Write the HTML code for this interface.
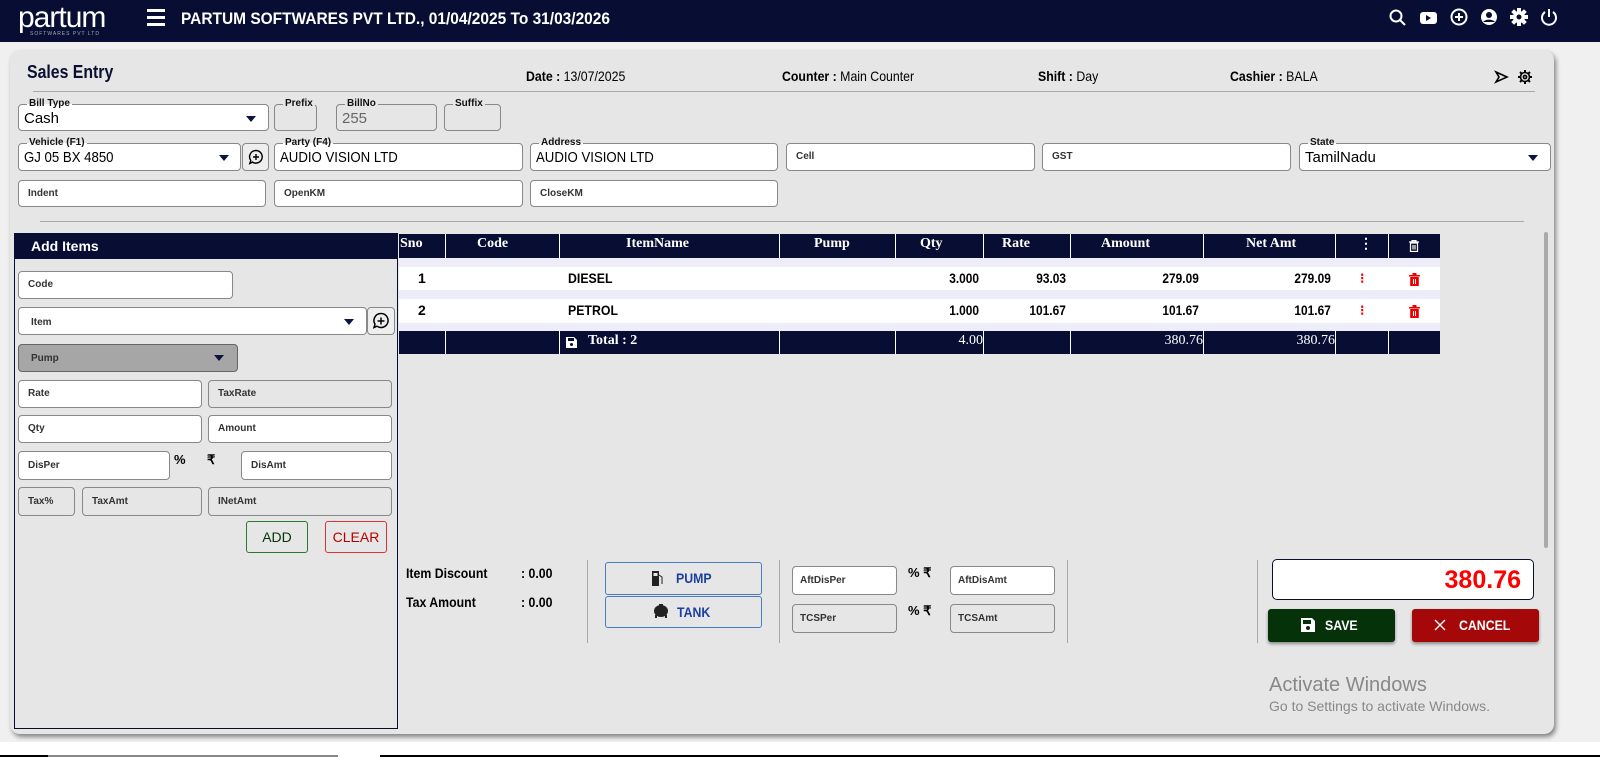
<!DOCTYPE html>
<html><head><meta charset="utf-8"><style>
*{box-sizing:border-box;margin:0;padding:0}
body{width:1600px;height:772px;background:#fff;font-family:"Liberation Sans",sans-serif;position:relative;overflow:hidden;color:#000}
.a{position:absolute;white-space:nowrap}
.nav{left:0;top:0;width:1600px;height:42px;background:#070d33}
.bg{left:0;top:42px;width:1600px;height:700px;background:#f0f0f0}
.card{left:10px;top:50px;width:1544px;height:684px;background:#e6e6e6;border-radius:10px;box-shadow:2px 3px 5px rgba(0,0,0,.45)}
.f{position:absolute;background:#fff;border:1px solid #888;border-radius:4px}
.g{background:#e6e6e6}
.ph{position:absolute;left:9px;font:bold 10px "Liberation Sans",sans-serif;color:#333;white-space:nowrap}
.lg{position:absolute;top:-7px;left:8px;font:bold 10px "Liberation Sans",sans-serif;color:#111;background:linear-gradient(#e6e6e6 50%,#fff 50%);padding:0 2px;line-height:12px;white-space:nowrap}
.val{position:absolute;left:5px;top:5px;font:15px "Liberation Sans",sans-serif;white-space:nowrap}
.dd{position:absolute;width:0;height:0;border-left:5px solid transparent;border-right:5px solid transparent;border-top:6px solid #0a1540}
.b{font-weight:bold}
.col{position:absolute;top:0;width:1px;background:#fff}
.vl{position:absolute;width:1px;background:#aaa;top:560px;height:83px}
.n{display:inline-block;transform:scaleX(.88);transform-origin:left}
.nr{display:inline-block;transform:scaleX(.85);transform-origin:right}
</style></head><body>
<div class="a nav"></div>
<div class="a" style="left:18px;top:3px;color:#fff;font:30px 'Liberation Sans',sans-serif;letter-spacing:-1px;line-height:30px">partum</div>
<div class="a" style="left:30px;top:31px;color:#aab;font:5px 'Liberation Sans',sans-serif;letter-spacing:1px">SOFTWARES PVT LTD</div>
<div class="a" style="left:147px;top:9px;width:18px;height:3px;background:#fff;box-shadow:0 7px 0 #fff,0 14px 0 #fff"></div>
<div class="a" style="left:181px;top:9px;color:#fff;font:bold 17px 'Liberation Sans',sans-serif"><span class="n" style="transform:scaleX(.91)">PARTUM SOFTWARES PVT LTD., 01/04/2025 To 31/03/2026</span></div>
<svg class="a" style="left:1388px;top:8px" width="200" height="20" viewBox="0 0 200 20" fill="none" stroke="#fff" stroke-width="2">
<circle cx="8" cy="8" r="5.5"/><path d="M12 12l5 5"/>
<rect x="32" y="4" width="17" height="12" rx="3" fill="#fff" stroke="none"/><path d="M38 7v6l5-3z" fill="#070d33" stroke="none"/>
<circle cx="71" cy="9" r="7.5"/><path d="M71 5v8M67 9h8"/>
<circle cx="101" cy="9" r="8" fill="#fff" stroke="none"/><circle cx="101" cy="7" r="3" fill="#070d33" stroke="none"/><path d="M95 14a7 5 0 0 1 12 0" fill="#070d33" stroke="none"/>
<g transform="translate(131 9)" fill="#fff" stroke="none"><circle r="6"/><rect x="-2" y="-9" width="4" height="18"/><rect x="-2" y="-9" width="4" height="18" transform="rotate(45)"/><rect x="-2" y="-9" width="4" height="18" transform="rotate(90)"/><rect x="-2" y="-9" width="4" height="18" transform="rotate(135)"/><circle r="2.5" fill="#070d33"/></g>
<path d="M157 4a7 7 0 1 0 8 0M161 1v8"/>
</svg>
<div class="a bg"></div>
<div class="a card"></div>
<div class="a b" style="left:27px;top:62px;font-size:18px;color:#0a0f30"><span class="n">Sales Entry</span></div>
<div class="a" style="left:526px;top:68px;font-size:14px"><span class="n"><b>Date :</b> 13/07/2025</span></div>
<div class="a" style="left:782px;top:68px;font-size:14px"><span class="n"><b>Counter :</b> Main Counter</span></div>
<div class="a" style="left:1038px;top:68px;font-size:14px"><span class="n"><b>Shift :</b> Day</span></div>
<div class="a" style="left:1230px;top:68px;font-size:14px"><span class="n"><b>Cashier :</b> BALA</span></div>
<svg class="a" style="left:1494px;top:69px" width="40" height="16" fill="none" stroke="#000" stroke-width="1.6"><path d="M2 3l11 5-11 5 3-5z"/><g transform="translate(31 8)"><circle r="4.5"/><path d="M0-7v2.5M0 4.5V7M-7 0h2.5M4.5 0H7M-5-5l1.8 1.8M3.2 3.2L5 5M5-5L3.2-3.2M-3.2 3.2L-5 5" stroke-width="2"/><circle r="1.6"/></g></svg>
<div class="a" style="left:33px;top:91px;width:1502px;height:1px;background:#aaa"></div>

<div class="f" style="left:18px;top:104px;width:251px;height:27px"><span class="lg">Bill Type</span><span class="val" style="top:5px">Cash</span><i class="dd" style="left:227px;top:11px"></i></div>
<div class="f g" style="left:274px;top:104px;width:43px;height:27px"><span class="lg" style="background:#e6e6e6">Prefix</span></div>
<div class="f g" style="left:336px;top:104px;width:101px;height:27px"><span class="lg" style="background:#e6e6e6">BillNo</span><span class="val" style="color:#666">255</span></div>
<div class="f g" style="left:444px;top:104px;width:57px;height:27px"><span class="lg" style="background:#e6e6e6">Suffix</span></div>

<div class="f" style="left:18px;top:143px;width:223px;height:28px"><span class="lg">Vehicle (F1)</span><span class="val"><span class="n">GJ 05 BX 4850</span></span><i class="dd" style="left:200px;top:11px"></i></div>
<div class="f" style="left:242px;top:143px;width:27px;height:28px;background:#eee"><svg class="a" style="left:5px;top:5px" width="16" height="16" fill="none" stroke="#000" stroke-width="1.4"><path d="M8 1.5a6.3 6.3 0 1 1-3.5 11.6L1.8 14.5l1-3A6.3 6.3 0 0 1 8 1.5zM8 5v6M5 8h6"/></svg></div>
<div class="f" style="left:274px;top:143px;width:249px;height:28px"><span class="lg">Party (F4)</span><span class="val"><span class="n">AUDIO VISION LTD</span></span></div>
<div class="f" style="left:530px;top:143px;width:248px;height:28px"><span class="lg">Address</span><span class="val"><span class="n">AUDIO VISION LTD</span></span></div>
<div class="f" style="left:786px;top:143px;width:249px;height:28px"><span class="ph" style="top:7px">Cell</span></div>
<div class="f" style="left:1042px;top:143px;width:249px;height:28px"><span class="ph" style="top:7px">GST</span></div>
<div class="f" style="left:1299px;top:143px;width:252px;height:28px"><span class="lg">State</span><span class="val">TamilNadu</span><i class="dd" style="left:228px;top:11px"></i></div>

<div class="f" style="left:18px;top:180px;width:248px;height:27px"><span class="ph" style="top:7px">Indent</span></div>
<div class="f" style="left:274px;top:180px;width:249px;height:27px"><span class="ph" style="top:7px">OpenKM</span></div>
<div class="f" style="left:530px;top:180px;width:248px;height:27px"><span class="ph" style="top:7px">CloseKM</span></div>
<div class="a" style="left:40px;top:221px;width:1484px;height:1px;background:#aaa"></div>

<div class="a" style="left:14px;top:233px;width:384px;height:496px;border:1px solid #070d33"></div>
<div class="a" style="left:14px;top:233px;width:384px;height:26px;background:#070d33;color:#fff;font:bold 14px 'Liberation Sans',sans-serif;padding:5px 17px">Add Items</div>
<div class="f" style="left:18px;top:271px;width:215px;height:28px"><span class="ph" style="top:7px">Code</span></div>
<div class="f" style="left:18px;top:307px;width:349px;height:28px"><span class="ph" style="top:9px;left:12px">Item</span><i class="dd" style="left:325px;top:11px"></i></div>
<div class="f" style="left:367px;top:307px;width:28px;height:28px;background:#eee"><svg class="a" style="left:4px;top:4px" width="18" height="18" fill="none" stroke="#000" stroke-width="1.5"><path d="M9 1.5a7 7 0 1 1-4 12.7L2 15.5l1-3.3A7 7 0 0 1 9 1.5zM9 5.5v7M5.5 9h7"/></svg></div>
<div class="f" style="left:18px;top:344px;width:220px;height:28px;background:#a6a6a6;border-color:#666"><span class="ph" style="top:8px;left:12px">Pump</span><i class="dd" style="left:195px;top:10px"></i></div>
<div class="f" style="left:18px;top:380px;width:184px;height:28px"><span class="ph" style="top:7px">Rate</span></div>
<div class="f g" style="left:208px;top:380px;width:184px;height:28px"><span class="ph" style="top:7px">TaxRate</span></div>
<div class="f" style="left:18px;top:415px;width:184px;height:28px"><span class="ph" style="top:7px">Qty</span></div>
<div class="f" style="left:208px;top:415px;width:184px;height:28px"><span class="ph" style="top:7px">Amount</span></div>
<div class="f" style="left:18px;top:451px;width:152px;height:29px"><span class="ph" style="top:8px">DisPer</span></div>
<div class="a b" style="left:174px;top:452px;font-size:13px">%</div>
<div class="a b" style="left:207px;top:452px;font-size:13px">₹</div>
<div class="f" style="left:241px;top:451px;width:151px;height:29px"><span class="ph" style="top:8px">DisAmt</span></div>
<div class="f g" style="left:18px;top:487px;width:57px;height:29px"><span class="ph" style="top:8px">Tax%</span></div>
<div class="f g" style="left:82px;top:487px;width:120px;height:29px"><span class="ph" style="top:8px">TaxAmt</span></div>
<div class="f g" style="left:208px;top:487px;width:184px;height:29px"><span class="ph" style="top:8px">INetAmt</span></div>
<div class="a" style="left:246px;top:521px;width:62px;height:32px;border:1px solid #2b7a2b;border-radius:3px;color:#063209;font:14px 'Liberation Sans',sans-serif;text-align:center;line-height:30px">ADD</div>
<div class="a" style="left:325px;top:521px;width:62px;height:32px;border:1px solid #d33;border-radius:3px;color:#b00;font:14px 'Liberation Sans',sans-serif;text-align:center;line-height:30px">CLEAR</div>

<div class="a" style="left:399px;top:234px;width:1041px;height:24px;background:#070d33"></div>
<div class="a" style="left:399px;top:258px;width:1041px;height:73px;background:#ededfa"></div>
<div class="a" style="left:399px;top:267px;width:1041px;height:23px;background:#fff"></div>
<div class="a" style="left:399px;top:299px;width:1041px;height:24px;background:#fff"></div>
<div class="a" style="left:399px;top:331px;width:1041px;height:23px;background:#070d33"></div>
<div class="a" style="left:0;top:234px;height:24px">
<i class="col" style="left:445px;height:24px"></i><i class="col" style="left:559px;height:24px"></i><i class="col" style="left:779px;height:24px"></i><i class="col" style="left:895px;height:24px"></i><i class="col" style="left:983px;height:24px"></i><i class="col" style="left:1070px;height:24px"></i><i class="col" style="left:1203px;height:24px"></i><i class="col" style="left:1335px;height:24px"></i><i class="col" style="left:1388px;height:24px"></i></div>
<div class="a" style="left:0;top:331px;height:23px">
<i class="col" style="left:445px;height:23px"></i><i class="col" style="left:559px;height:23px"></i><i class="col" style="left:779px;height:23px"></i><i class="col" style="left:895px;height:23px"></i><i class="col" style="left:983px;height:23px"></i><i class="col" style="left:1070px;height:23px"></i><i class="col" style="left:1203px;height:23px"></i><i class="col" style="left:1335px;height:23px"></i><i class="col" style="left:1388px;height:23px"></i></div>
<div class="a" style="top:236px;left:0;color:#fff;font:bold 14px 'Liberation Serif',serif">
<span class="a" style="left:400px">Sno</span><span class="a" style="left:477px">Code</span><span class="a" style="left:626px">ItemName</span><span class="a" style="left:814px">Pump</span><span class="a" style="left:920px">Qty</span><span class="a" style="left:1002px">Rate</span><span class="a" style="left:1101px">Amount</span><span class="a" style="left:1246px">Net Amt</span><span class="a" style="left:1359px">⋮</span>
</div>
<svg class="a" style="left:1409px;top:240px" width="10" height="12" fill="none" stroke="#fff" stroke-width="1.2"><path d="M0 2h10M3 2V0.6h4V2M1.5 3h7v8.5h-7zM4 5v4.5M6 5v4.5"/></svg>
<div class="a b" style="top:270px;left:0;font-size:14px">
<span class="a" style="left:418px">1</span><span class="a" style="left:568px"><span class="n">DIESEL</span></span><span class="a" style="left:920px;width:59px;text-align:right"><span class="nr">3.000</span></span><span class="a" style="left:1000px;width:66px;text-align:right"><span class="nr">93.03</span></span><span class="a" style="left:1120px;width:79px;text-align:right"><span class="nr">279.09</span></span><span class="a" style="left:1252px;width:79px;text-align:right"><span class="nr">279.09</span></span><span class="a" style="left:1360px;color:#e00">⁝</span></div>
<div class="a b" style="top:302px;left:0;font-size:14px">
<span class="a" style="left:418px">2</span><span class="a" style="left:568px"><span class="n">PETROL</span></span><span class="a" style="left:920px;width:59px;text-align:right"><span class="nr">1.000</span></span><span class="a" style="left:1000px;width:66px;text-align:right"><span class="nr">101.67</span></span><span class="a" style="left:1120px;width:79px;text-align:right"><span class="nr">101.67</span></span><span class="a" style="left:1252px;width:79px;text-align:right"><span class="nr">101.67</span></span><span class="a" style="left:1360px;color:#e00">⁝</span></div>
<svg class="a" style="left:1409px;top:273px" width="11" height="13" fill="#e00"><path d="M0 2h11v1.5H0zM3.5 0h4v2h-4zM1.2 4h8.6v9H1.2z"/><path d="M4 6h1v5H4zM6 6h1v5H6z" fill="#fff"/></svg>
<svg class="a" style="left:1409px;top:305px" width="11" height="13" fill="#e00"><path d="M0 2h11v1.5H0zM3.5 0h4v2h-4zM1.2 4h8.6v9H1.2z"/><path d="M4 6h1v5H4zM6 6h1v5H6z" fill="#fff"/></svg>
<div class="a" style="top:333px;left:0;color:#fff;font:14px 'Liberation Serif',serif">
<svg class="a" style="left:566px;top:3px" width="11" height="12"><path d="M0 1h8l3 3v8H0z" fill="#fff"/><rect x="2" y="2" width="6" height="3" fill="#070d33"/><circle cx="5.5" cy="8.5" r="1.5" fill="#070d33"/></svg>
<span class="a b" style="left:588px">Total : 2</span><span class="a" style="left:920px;width:63px;text-align:right">4.00</span><span class="a" style="left:1120px;width:83px;text-align:right">380.76</span><span class="a" style="left:1250px;width:85px;text-align:right">380.76</span></div>
<div class="a" style="left:1544px;top:232px;width:4px;height:316px;background:#aaa;border-radius:2px"></div>

<div class="a b" style="left:406px;top:565px;font-size:14px"><span class="n">Item Discount</span></div><div class="a b" style="left:521px;top:565px;font-size:14px"><span class="n">: 0.00</span></div>
<div class="a b" style="left:406px;top:594px;font-size:14px"><span class="n">Tax Amount</span></div><div class="a b" style="left:521px;top:594px;font-size:14px"><span class="n">: 0.00</span></div>
<i class="vl" style="left:587px"></i><i class="vl" style="left:779px"></i><i class="vl" style="left:1067px"></i><i class="vl" style="left:1257px"></i>
<div class="a" style="left:605px;top:562px;width:157px;height:33px;border:1px solid #4a7bc4;border-radius:3px;color:#1a3fa0;font:bold 14px 'Liberation Sans',sans-serif;line-height:31px;padding-left:70px"><span class="n">PUMP</span></div>
<svg class="a" style="left:651px;top:571px" width="12" height="15" fill="#222"><path d="M1 0h7v15H1z"/><rect x="2.5" y="2" width="4" height="3" fill="#e6e6e6"/><path d="M8 4l3 2v7" stroke="#222" fill="none"/></svg>
<div class="a" style="left:605px;top:596px;width:157px;height:32px;border:1px solid #4a7bc4;border-radius:3px;color:#1a3fa0;font:bold 14px 'Liberation Sans',sans-serif;line-height:30px;padding-left:71px"><span class="n">TANK</span></div>
<svg class="a" style="left:653px;top:604px" width="16" height="14" fill="#222"><ellipse cx="8" cy="7" rx="7" ry="6"/><rect x="6" y="0" width="4" height="2"/><rect x="2" y="11" width="2" height="3"/><rect x="12" y="11" width="2" height="3"/></svg>
<div class="f" style="left:792px;top:566px;width:105px;height:29px"><span class="ph" style="top:8px;left:7px">AftDisPer</span></div>
<div class="a b" style="left:908px;top:565px;font-size:13px">% ₹</div>
<div class="f" style="left:950px;top:566px;width:105px;height:29px"><span class="ph" style="top:8px;left:7px">AftDisAmt</span></div>
<div class="f g" style="left:792px;top:604px;width:105px;height:29px"><span class="ph" style="top:8px;left:7px">TCSPer</span></div>
<div class="a b" style="left:908px;top:603px;font-size:13px">% ₹</div>
<div class="f g" style="left:950px;top:604px;width:105px;height:29px"><span class="ph" style="top:8px;left:7px">TCSAmt</span></div>
<div class="a" style="left:1272px;top:559px;width:262px;height:41px;background:#fff;border:1px solid #0a0f30;border-radius:5px;color:#f00;font:bold 25px 'Liberation Sans',sans-serif;text-align:right;padding:6px 12px 0 0">380.76</div>
<div class="a" style="left:1268px;top:609px;width:127px;height:33px;background:#063209;border-radius:3px;box-shadow:0 2px 3px rgba(0,0,0,.4);color:#fff;font:bold 14px 'Liberation Sans',sans-serif;line-height:33px;padding-left:57px"><span class="n">SAVE</span></div>
<svg class="a" style="left:1301px;top:618px" width="14" height="14"><path d="M0 0h11l3 3v11H0z" fill="#fff"/><rect x="2" y="2" width="8" height="4" fill="#063209"/><circle cx="7" cy="10" r="2" fill="#063209"/></svg>
<div class="a" style="left:1412px;top:609px;width:127px;height:33px;background:#a50808;border-radius:3px;box-shadow:0 2px 3px rgba(0,0,0,.4);color:#fff;font:bold 14px 'Liberation Sans',sans-serif;line-height:33px;padding-left:47px"><span class="n">CANCEL</span></div>
<svg class="a" style="left:1434px;top:619px" width="12" height="12" stroke="#fff" stroke-width="1.4"><path d="M1 1l10 10M11 1L1 11"/></svg>
<div class="a" style="left:1269px;top:674px;font:20px 'Liberation Sans',sans-serif;color:#888">Activate Windows</div>
<div class="a" style="left:1269px;top:698px;font:14px 'Liberation Sans',sans-serif;color:#888">Go to Settings to activate Windows.</div>
<div class="a" style="left:0;top:755px;width:48px;height:2px;background:#000"></div>
<div class="a" style="left:48px;top:755px;width:290px;height:2px;background:#888"></div>
<div class="a" style="left:380px;top:755px;width:1220px;height:2px;background:#000"></div>
</body></html>
